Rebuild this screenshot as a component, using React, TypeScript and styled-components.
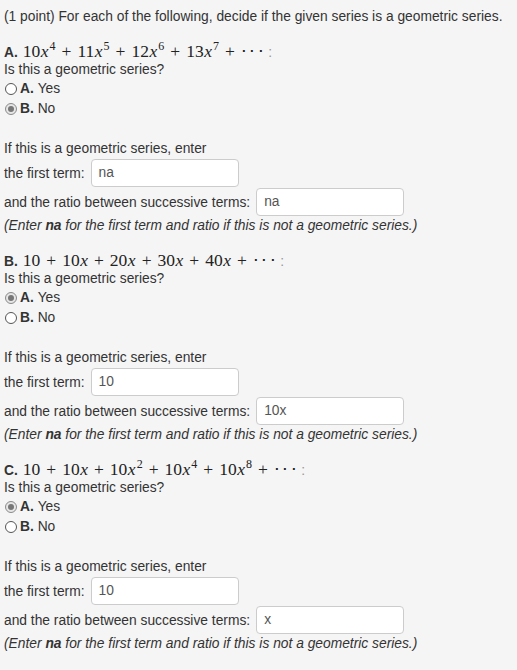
import React from 'react';
import styled, { createGlobalStyle } from 'styled-components';

const GlobalStyle = createGlobalStyle`
  html, body {
    margin: 0;
    padding: 0;
    background: #f5f5f5;
  }
  body {
    font-family: "Liberation Sans", Arial, sans-serif;
    font-size: 13.8px;
    color: #333;
  }
`;

const Page = styled.div`
  padding: 7px 4px 0 4px;
  width: 517px;
  box-sizing: border-box;
`;

const Line = styled.div`
  line-height: 20px;
  height: 20px;
  white-space: nowrap;
`;

const Question = styled.div`
  line-height: 19px;
  height: 19px;
`;

const SeriesLine = styled.div`
  margin-top: 15px;
  height: 18px;
  line-height: 18px;
  display: flex;
  align-items: baseline;
  white-space: nowrap;
`;

const Letter = styled.b`
  font-weight: bold;
  margin-right: 5px;
`;

const Math = styled.span`
  font-family: "Liberation Serif", "Times New Roman", serif;
  font-size: 17.5px;
  color: #222;
`;

const Var = styled.i`
  font-style: italic;
  margin-left: 0.5px;
`;

const Sup = styled.sup`
  font-size: 12px;
  line-height: 0;
  vertical-align: 7px;
  margin-left: 1px;
`;

const Op = styled.span`
  margin: 0 6px;
`;

const Dots = styled.span`
  letter-spacing: 2.5px;
`;

const Colon = styled.span`
  margin-left: 2px;
  color: #999;
`;

const Choice = styled.label`
  display: flex;
  align-items: center;
  height: 20px;
  line-height: 20px;
`;

const Radio = styled.span<{ $on?: boolean }>`
  width: 12px;
  height: 12px;
  border-radius: 50%;
  box-sizing: border-box;
  border: 1px solid ${({ $on }) => ($on ? '#8a8a8a' : '#555')};
  background: ${({ $on }) => ($on ? '#e6e6e6' : '#fff')};
  margin: 0 3px 0 1px;
  display: inline-flex;
  align-items: center;
  justify-content: center;
  &::after {
    content: '';
    display: ${({ $on }) => ($on ? 'block' : 'none')};
    width: 6px;
    height: 6px;
    border-radius: 50%;
    background: #777;
  }
`;

const Blank = styled.div`
  height: 20px;
`;

const InputRow = styled.div`
  display: flex;
  align-items: center;
  height: 28px;
  & + & {
    margin-top: 1px;
  }
`;

const Field = styled.div`
  margin-left: 6px;
  width: 148px;
  height: 28px;
  box-sizing: border-box;
  background: #fff;
  border: 1px solid #ccc;
  border-radius: 4px;
  padding: 0 7px;
  line-height: 26px;
  color: #555;
`;

const Note = styled.div`
  font-style: italic;
  line-height: 20px;
  height: 20px;
  white-space: nowrap;
  b {
    font-weight: bold;
  }
`;

type Term = { coef?: string; x?: boolean; exp?: string };

function Series({ terms }: { terms: Term[] }) {
  return (
    <Math>
      {terms.map((t, i) => (
        <React.Fragment key={i}>
          {i > 0 && <Op>+</Op>}
          {t.coef}
          {t.x && <Var>x</Var>}
          {t.exp && <Sup>{t.exp}</Sup>}
        </React.Fragment>
      ))}
      <Op>+</Op>
      <Dots>⋅⋅⋅</Dots>
    </Math>
  );
}

type Problem = {
  letter: string;
  terms: Term[];
  yes: boolean;
  first: string;
  ratio: string;
};

const problems: Problem[] = [
  {
    letter: 'A.',
    terms: [
      { coef: '10', x: true, exp: '4' },
      { coef: '11', x: true, exp: '5' },
      { coef: '12', x: true, exp: '6' },
      { coef: '13', x: true, exp: '7' },
    ],
    yes: false,
    first: 'na',
    ratio: 'na',
  },
  {
    letter: 'B.',
    terms: [
      { coef: '10' },
      { coef: '10', x: true },
      { coef: '20', x: true },
      { coef: '30', x: true },
      { coef: '40', x: true },
    ],
    yes: true,
    first: '10',
    ratio: '10x',
  },
  {
    letter: 'C.',
    terms: [
      { coef: '10' },
      { coef: '10', x: true },
      { coef: '10', x: true, exp: '2' },
      { coef: '10', x: true, exp: '4' },
      { coef: '10', x: true, exp: '8' },
    ],
    yes: true,
    first: '10',
    ratio: 'x',
  },
];

function ProblemBlock({ p }: { p: Problem }) {
  return (
    <div>
      <SeriesLine>
        <Letter>{p.letter}</Letter>
        <Series terms={p.terms} />
        <Colon>:</Colon>
      </SeriesLine>
      <Question>Is this a geometric series?</Question>
      <Choice>
        <Radio $on={p.yes} />
        <b>A.</b>&nbsp;Yes
      </Choice>
      <Choice>
        <Radio $on={!p.yes} />
        <b>B.</b>&nbsp;No
      </Choice>
      <Blank />
      <Line>If this is a geometric series, enter</Line>
      <InputRow>
        the first term:
        <Field>{p.first}</Field>
      </InputRow>
      <InputRow>
        and the ratio between successive terms:
        <Field>{p.ratio}</Field>
      </InputRow>
      <Note>
        (Enter <b>na</b> for the first term and ratio if this is not a geometric series.)
      </Note>
    </div>
  );
}

export default function App() {
  return (
    <>
      <GlobalStyle />
      <Page>
        <Line>(1 point) For each of the following, decide if the given series is a geometric series.</Line>
        {problems.map((p) => (
          <ProblemBlock key={p.letter} p={p} />
        ))}
      </Page>
    </>
  );
}
